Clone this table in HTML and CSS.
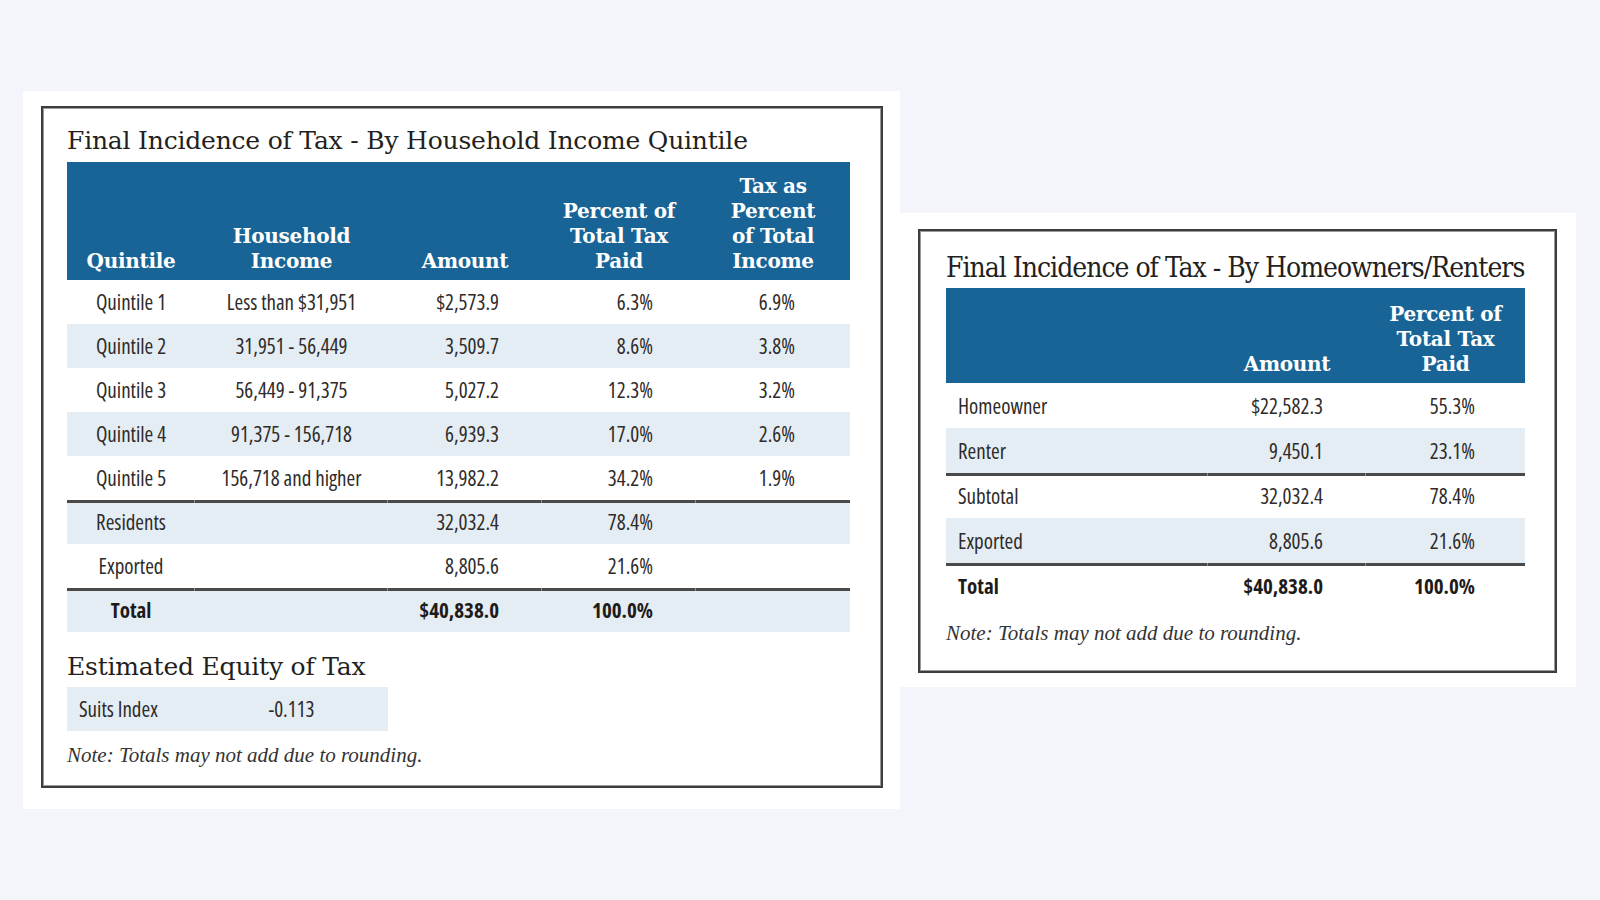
FILE: index.html
```html
<!DOCTYPE html>
<html>
<head>
<meta charset="utf-8">
<link rel="stylesheet" href="styles.css">
</head>
<body>
<div class="page">
  <div class="card card-left">
    <div class="frame frame-left">
      <h2 class="title">Final Incidence of Tax - By Household Income Quintile</h2>
      <table class="tbl tbl-left">
        <colgroup>
          <col class="c1"><col class="c2"><col class="c3"><col class="c4"><col class="c5">
        </colgroup>
        <thead>
          <tr>
            <th>Quintile</th>
            <th>Household<br>Income</th>
            <th>Amount</th>
            <th>Percent of<br>Total Tax<br>Paid</th>
            <th>Tax as<br>Percent<br>of Total<br>Income</th>
          </tr>
        </thead>
        <tbody>
          <tr><td class="ctr">Quintile 1</td><td class="ctr">Less than $31,951</td><td class="num">$2,573.9</td><td class="num">6.3%</td><td class="num2">6.9%</td></tr>
          <tr class="alt"><td class="ctr">Quintile 2</td><td class="ctr">31,951 - 56,449</td><td class="num">3,509.7</td><td class="num">8.6%</td><td class="num2">3.8%</td></tr>
          <tr><td class="ctr">Quintile 3</td><td class="ctr">56,449 - 91,375</td><td class="num">5,027.2</td><td class="num">12.3%</td><td class="num2">3.2%</td></tr>
          <tr class="alt"><td class="ctr">Quintile 4</td><td class="ctr">91,375 - 156,718</td><td class="num">6,939.3</td><td class="num">17.0%</td><td class="num2">2.6%</td></tr>
          <tr><td class="ctr">Quintile 5</td><td class="ctr">156,718 and higher</td><td class="num">13,982.2</td><td class="num">34.2%</td><td class="num2">1.9%</td></tr>
          <tr class="alt sep"><td class="ctr">Residents</td><td></td><td class="num">32,032.4</td><td class="num">78.4%</td><td></td></tr>
          <tr><td class="ctr">Exported</td><td></td><td class="num">8,805.6</td><td class="num">21.6%</td><td></td></tr>
          <tr class="alt sep total"><td class="ctr">Total</td><td></td><td class="num">$40,838.0</td><td class="num">100.0%</td><td></td></tr>
        </tbody>
      </table>
      <h2 class="title title-sub">Estimated Equity of Tax</h2>
      <table class="tbl tbl-suits">
        <colgroup><col class="c1"><col class="c2"></colgroup>
        <tbody>
          <tr class="alt"><td class="lbl">Suits Index</td><td class="ctr">-0.113</td></tr>
        </tbody>
      </table>
      <p class="note">Note: Totals may not add due to rounding.</p>
    </div>
  </div>

  <div class="card card-right">
    <div class="frame frame-right">
      <h2 class="title title-cond">Final Incidence of Tax - By Homeowners/Renters</h2>
      <table class="tbl tbl-right">
        <colgroup>
          <col class="r1"><col class="r2"><col class="r3">
        </colgroup>
        <thead>
          <tr>
            <th></th>
            <th>Amount</th>
            <th>Percent of<br>Total Tax<br>Paid</th>
          </tr>
        </thead>
        <tbody>
          <tr><td class="lbl">Homeowner</td><td class="num">$22,582.3</td><td class="num3">55.3%</td></tr>
          <tr class="alt"><td class="lbl">Renter</td><td class="num">9,450.1</td><td class="num3">23.1%</td></tr>
          <tr class="sep"><td class="lbl">Subtotal</td><td class="num">32,032.4</td><td class="num3">78.4%</td></tr>
          <tr class="alt"><td class="lbl">Exported</td><td class="num">8,805.6</td><td class="num3">21.6%</td></tr>
          <tr class="sep total"><td class="lbl">Total</td><td class="num">$40,838.0</td><td class="num3">100.0%</td></tr>
        </tbody>
      </table>
      <p class="note note-right">Note: Totals may not add due to rounding.</p>
    </div>
  </div>
</div>
</body>
</html>
```

FILE: styles.css
```css
html, body {
  margin: 0;
  padding: 0;
}
body {
  background: #f3f5fa;
  width: 1600px;
  height: 900px;
  overflow: hidden;
  color: #2e2b2a;
  font-family: "Open Sans", "DejaVu Sans Condensed", sans-serif;
  font-stretch: 78%;
}
.page {
  display: flex;
  align-items: flex-start;
  padding: 91px 0 0 23px;
}
.card {
  background: #ffffff;
  box-sizing: border-box;
}
.card-left {
  width: 877px;
  padding: 15px 17px 21px 18px;
}
.card-right {
  width: 676px;
  margin-top: 122px;
  padding: 16px 19px 14px 18px;
}
.frame {
  border: 2px solid #3d3d3d;
  box-shadow: inset 0 0 0 1px #9a9a9a;
}
.frame-left {
  padding: 17px 31px 14px 24px;
  height: 682px;
  box-sizing: border-box;
}
.frame-right {
  padding: 21px 30px 14px 26px;
  height: 444px;
  box-sizing: border-box;
}
.title {
  margin: 0;
  font-family: "DejaVu Serif", "Liberation Serif", serif;
  font-stretch: normal;
  font-weight: normal;
  font-size: 25px;
  line-height: 32px;
  color: #231f20;
  letter-spacing: -0.2px;
  margin-bottom: 5px;
}
.title-cond {
  font-stretch: condensed;
  font-size: 28px;
  letter-spacing: -1px;
  margin-bottom: 4px;
}
.title-sub {
  margin-top: 19px;
  margin-bottom: 4px;
}
.tbl {
  border-collapse: collapse;
  table-layout: fixed;
}
.tbl-left { width: 783px; }
.tbl-right { width: 579px; }
.tbl-suits { width: 321px; }
.c1 { width: 128px; }
.c2 { width: 193px; }
.c3 { width: 154px; }
.c4 { width: 154px; }
.c5 { width: 154px; }
.r1 { width: 262px; }
.r2 { width: 158px; }
.r3 { width: 159px; }
.tbl thead th {
  background: #186496;
  color: #ffffff;
  font-family: "DejaVu Serif", "Liberation Serif", serif;
  font-stretch: normal;
  font-weight: bold;
  font-size: 20px;
  line-height: 25px;
  text-align: center;
  vertical-align: bottom;
  padding: 0 0 6px;
  letter-spacing: -0.3px;
}
.tbl-left thead th { height: 118px; box-sizing: border-box; }
.tbl-right thead th { height: 95px; box-sizing: border-box; }
.tbl td {
  font-size: 21px;
  height: 44px;
  padding: 0;
  vertical-align: middle;
  box-sizing: border-box;
}
.tbl-right td { height: 45px; }
.tbl-suits td { height: 44px; }
.alt td { background-color: #e5edf4; }
.sep td {
  background-image:
    linear-gradient(#4a4a4a, #4a4a4a),
    linear-gradient(#8e8e8e, #8e8e8e);
  background-size: calc(100% - 1px) 3px, 100% 3px;
  background-position: 0 0, 0 0;
  background-repeat: no-repeat;
}
.sep td:last-child {
  background-size: 100% 3px, 100% 3px;
}
.total td { font-weight: bold; color: #1e1b1a; }
.ctr { text-align: center; }
.num { text-align: right; padding-right: 43px !important; }
.num2 { text-align: right; padding-right: 55px !important; }
.num3 { text-align: right; padding-right: 50px !important; }
.lbl { text-align: left; padding-left: 12px !important; }
.note {
  margin: 12px 0 0;
  font-family: "Liberation Serif", "DejaVu Serif", serif;
  font-stretch: normal;
  font-style: italic;
  font-size: 21px;
  color: #333333;
}
.note-right { margin-top: 13px; }
```
